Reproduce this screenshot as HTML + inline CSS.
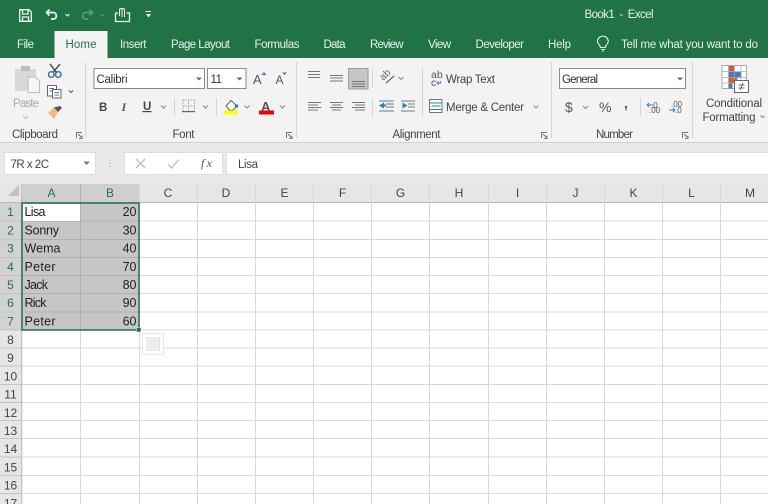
<!DOCTYPE html>
<html><head><meta charset="utf-8"><style>
html,body{margin:0;padding:0;background:#fff;overflow:hidden}
svg{display:block;font-family:"Liberation Sans",sans-serif;filter:blur(.35px)}
text{white-space:pre}
.t{fill:#e8f1eb;font-size:11.5px}
.r{fill:#444;font-size:11.5px}
.c{fill:#222;font-size:12.5px}
.h{fill:#444;font-size:12px;text-anchor:middle}
.hs{fill:#217346;font-size:12px;text-anchor:middle}
.n{fill:#222;font-size:12.5px;text-anchor:end}
</style></head><body>
<svg width="768" height="504" viewBox="0 0 768 504" xmlns="http://www.w3.org/2000/svg">
<!-- Bars -->
<rect width="768" height="504" fill="#fff"/>
<rect width="768" height="59" fill="#217346"/>
<rect y="58" width="768" height="84" fill="#f3f3f3"/>
<rect y="142" width="768" height="1" fill="#d2d2d2"/>
<rect y="143" width="768" height="41" fill="#e9e9e9"/>
<path d="M54.500 58V31H107.500V58Z" fill="#f3f3f3"/>

<!-- QAT -->
<g fill="none" stroke="#f2f6f3" stroke-width="1.300">
<path d="M19.700 9.700H29L31.300 12V21.300H19.700Z"/><path d="M22.500 10V14H28V10M22.500 21V17H28.500V21"/>
<path d="M47 12.500H53.500C57 12.500 57.500 19 53.500 19H51M49.500 9.500L46.500 12.500L49.500 15.500" stroke-width="1.700"/>
<path d="M65.500 14L67.500 16L69.500 14" stroke-width="1"/>
<path d="M92 12.500H85.500C82 12.500 81.500 19 85.500 19H88M89.500 9.500L92.500 12.500L89.500 15.500" stroke="#5c9a78" stroke-width="1.700"/>
<path d="M100.500 14L102.500 16L104.500 14" stroke="#5c9a78" stroke-width="1"/>
<path d="M115.500 13V21.500H129.500V13H126.500M115.500 13H118"/>
<path d="M119.500 16V10C119.500 8 122 8 122 10V17M122 16V10C122 8 124.500 8 124.500 10V17" stroke-width="1"/>
<path d="M145.500 11.500H151" stroke-width="1"/>
</g>
<path d="M146 14H151L148.500 17.500Z" fill="#f2f6f3"/>
<text x="584.500" y="18" class="t" textLength="69">Book1  -  Excel</text>

<!-- Tabs -->
<text x="17" y="48" class="t" textLength="17">File</text>
<text x="65.500" y="48" font-size="11.500" fill="#217346" textLength="31">Home</text>
<text x="120" y="48" class="t" textLength="26.500">Insert</text>
<text x="171" y="48" class="t" textLength="59">Page Layout</text>
<text x="254.500" y="48" class="t" textLength="45">Formulas</text>
<text x="323.500" y="48" class="t" textLength="22">Data</text>
<text x="370" y="48" class="t" textLength="33.500">Review</text>
<text x="428" y="48" class="t" textLength="23">View</text>
<text x="475.500" y="48" class="t" textLength="48.500">Developer</text>
<text x="548" y="48" class="t" textLength="23">Help</text>
<g fill="none" stroke="#e4efe8" stroke-width="1.100"><path d="M600.500 47.500C600 44.500 597.500 44 597.500 41.500A5.400 5.400 0 0 1 608.300 41.500C608.300 44 605.700 44.500 605.300 47.500ZM601 49.500H605M602 51H604"/></g>
<text x="621" y="48" class="t" textLength="137">Tell me what you want to do</text>

<!-- Group dividers -->
<g fill="#d6d6d6">
<rect x="85" y="62" width="1" height="76"/><rect x="296" y="62" width="1" height="76"/><rect x="551" y="62" width="1" height="76"/><rect x="692" y="62" width="1" height="76"/>
<rect x="174" y="98" width="1" height="18"/><rect x="216" y="98" width="1" height="18"/>
<rect x="372" y="69" width="1" height="19"/><rect x="372" y="98" width="1" height="19"/><rect x="422" y="67" width="1" height="50"/>
<rect x="640" y="98" width="1" height="18"/>
</g>

<!-- Clipboard -->
<rect x="15" y="69" width="21" height="22" fill="#d9d7d7"/>
<rect x="21" y="66" width="9" height="5" fill="#bdbbbb"/>
<path d="M28 77H35L39.500 81V92.500H28Z" fill="#f7f7f7" stroke="#bbb" stroke-width="1"/>
<text x="13" y="107" font-size="11.500" fill="#aaa" textLength="26">Paste</text>
<path d="M23 116L25.500 118.500L28 116" fill="none" stroke="#bbb"/>
<g fill="none" stroke="#2f6ea8" stroke-width="1.400"><circle cx="51.300" cy="74.500" r="2.800"/><circle cx="58.300" cy="74.500" r="2.800"/></g>
<path d="M50 64L56.500 72.500M60 64L53 72.500" stroke="#555" stroke-width="1.500" fill="none"/>
<g fill="#fff" stroke="#666" stroke-width="1"><rect x="47.500" y="85.500" width="9" height="10.500"/><rect x="52.500" y="89.500" width="8.500" height="8.500"/></g>
<path d="M49.500 88.500H54M49.500 91H52M54.500 92.500H59M54.500 95H59" stroke="#3b78ad" fill="none"/>
<path d="M69 90.500L71 92.500L73 90.500" fill="none" stroke="#555"/>
<path d="M48 113L54 107.500L58 112L54 119Z" fill="#e9bf7f"/>
<path d="M54 107.500L60 106L62 108L58 112Z" fill="#555"/>
<text x="12" y="138" class="r" textLength="46">Clipboard</text>
<g fill="none" stroke="#777" stroke-width="1"><path d="M76.500 138V132.500H82M78 134L82 138M82 135.500V138.500H79"/></g>

<!-- Font -->
<rect x="94" y="68.500" width="110.500" height="20" fill="#fff" stroke="#8a8a8a"/>
<text x="96.500" y="83" font-size="11.500" fill="#333" textLength="31">Calibri</text>
<path d="M196 77.500H202L199 80.500Z" fill="#666"/>
<rect x="207.500" y="68.500" width="38.500" height="20" fill="#fff" stroke="#8a8a8a"/>
<text x="210.500" y="83" font-size="11.500" fill="#333" textLength="11.500">11</text>
<path d="M236.500 77.500H242.500L239.500 80.500Z" fill="#666"/>
<text x="253" y="84" font-size="13" fill="#555" textLength="10">A</text>
<path d="M261.500 75L264 72L266.500 75Z" fill="#2f7cc0"/>
<text x="275.500" y="84" font-size="12" fill="#555" textLength="9">A</text>
<path d="M282 72.500H287L284.500 75Z" fill="#2f7cc0"/>
<text x="99" y="111" font-size="11.500" font-weight="bold" fill="#444" textLength="8">B</text>
<text x="121.500" y="111" font-size="12" font-style="italic" font-family="Liberation Serif" font-weight="bold" fill="#555" textLength="6">I</text>
<text x="143" y="110" font-size="11.500" font-weight="bold" fill="#444" textLength="8">U</text>
<rect x="142.500" y="111" width="9" height="1.200" fill="#444"/>
<path d="M161 105.500L163.500 108L166 105.500M203 105.500L205.500 108L208 105.500M244.500 105.500L247 108L249.500 105.500M280 105.500L282.500 108L285 105.500" fill="none" stroke="#888"/>
<g fill="none" stroke="#aaa" stroke-dasharray="1.500 1"><path d="M183 100H194M183 106H194M183 100V111M188.500 100V111M194.500 100V111"/></g>
<rect x="182" y="111" width="13" height="1.200" fill="#666"/>
<path d="M226 106L231 100.500L237 106L232.500 110.500H230Z" fill="#f9f9f9" stroke="#666"/>
<circle cx="236.500" cy="106" r="1.700" fill="#2f7cc0"/>
<rect x="224" y="110.500" width="14" height="4" fill="#ffff00"/>
<text x="261" y="111" font-size="13" font-weight="bold" fill="#555" textLength="10">A</text>
<rect x="259" y="110.500" width="15" height="4" fill="#f00000"/>
<text x="172.500" y="138" class="r" textLength="22">Font</text>
<g fill="none" stroke="#777" stroke-width="1"><path d="M286.500 138V132.500H292M288 134L292 138M292 135.500V138.500H289"/></g>

<!-- Alignment -->
<rect x="348.500" y="68.500" width="19.500" height="20.500" fill="#c6c6c6" stroke="#9c9c9c"/>
<g stroke="#777" stroke-width="1" fill="none">
<path d="M308 71.500H320M308 74.500H320M308 77.500H320"/>
<path d="M330 75.500H343M330 78H343M330 81H343"/>
<path d="M352 81.500H365M352 84H365M352 86.500H365"/>
<path d="M308 102.500H321M308 105H318M308 107.500H321M308 110H318"/>
<path d="M330 102.500H343M332 105H341M330 107.500H343M332 110H341"/>
<path d="M352 102.500H365M355 105H365M352 107.500H365M355 110H365"/>
<path d="M379 101H394M386 104H394M386 107H394M379 111H394"/>
<path d="M401 101H415M408 104H415M408 107H415M401 111H415"/>
</g>
<path d="M379 105.500L384 102.500V108.500ZM383 104.500H386V106.500H383Z" fill="#2f7cc0"/>
<path d="M407.500 105.500L402.500 102.500V108.500Z" fill="#2f7cc0"/>
<text x="380" y="79" font-size="10" fill="#666" transform="rotate(-45 384 76)">ab</text>
<path d="M386 83L394 76" stroke="#666" fill="none" stroke-width="1.200"/>
<path d="M398.500 77L401 79.500L403.500 77" fill="none" stroke="#888"/>
<text x="431" y="78" font-size="10.500" fill="#555">ab</text>
<text x="431" y="86" font-size="10.500" fill="#555">c</text>
<path d="M440.500 81V83H437M438.500 81.500L437 83L438.500 84.500" fill="none" stroke="#2f7cc0" stroke-width=".9"/>
<text x="446" y="83" class="r" textLength="49">Wrap Text</text>
<rect x="429.500" y="99.500" width="12.500" height="13" fill="#fff" stroke="#777"/>
<path d="M430 103H442M430 109.500H442M431.500 106H440.500" stroke="#2f7cc0" fill="none"/>
<text x="446" y="111" class="r" textLength="78">Merge &amp; Center</text>
<path d="M533.500 105.500L536 108L538.500 105.500" fill="none" stroke="#888"/>
<text x="392.500" y="138" class="r" textLength="48">Alignment</text>
<g fill="none" stroke="#777" stroke-width="1"><path d="M541.500 138V132.500H547M543 134L547 138M547 135.500V138.500H544"/></g>

<!-- Number -->
<rect x="559.500" y="68.500" width="126" height="20" fill="#fff" stroke="#8a8a8a"/>
<text x="562" y="83" font-size="11.500" fill="#333" textLength="36">General</text>
<path d="M677 77.500H683L680 80.500Z" fill="#666"/>
<text x="565" y="112" font-size="14" fill="#555" textLength="8">$</text>
<path d="M583 106L585.500 108.500L588 106" fill="none" stroke="#888"/>
<text x="599" y="112" font-size="14" fill="#555" textLength="12">%</text>
<text x="624" y="108" font-size="14" font-weight="bold" fill="#555">,</text>
<text x="651" y="108" font-size="8" fill="#555">.0</text>
<text x="649" y="113" font-size="8" fill="#555">.00</text>
<path d="M647 105H653M647 105L649 103M647 105L649 107" stroke="#2f7cc0" fill="none"/>
<text x="671" y="107" font-size="8" fill="#555">.00</text>
<text x="675" y="113" font-size="8" fill="#555">.0</text>
<path d="M669 110H675M675 110L673 108M675 110L673 112" stroke="#2f7cc0" fill="none"/>
<text x="596" y="138" class="r" textLength="37">Number</text>
<g fill="none" stroke="#777" stroke-width="1"><path d="M682.500 138V132.500H688M684 134L688 138M688 135.500V138.500H685"/></g>

<!-- Conditional Formatting -->
<rect x="722" y="65.500" width="24.500" height="23" fill="#fff" stroke="#aaa"/>
<rect x="728.500" y="66" width="5.500" height="6" fill="#d9583a"/>
<rect x="728.500" y="72" width="13" height="5.500" fill="#3f7fc4"/>
<rect x="728.500" y="77.500" width="9" height="5.500" fill="#d9583a"/>
<rect x="728.500" y="83" width="4" height="5.500" fill="#3f7fc4"/>
<path d="M728.500 65V88M734.500 65V88M741 65V88M722 71.500H746M722 77.500H746M722 83H746" stroke="#aaa" stroke-width=".7" fill="none"/>
<rect x="734.500" y="80.500" width="14" height="12" fill="#fff" stroke="#666"/>
<path d="M738.500 85H744.500M738.500 88H744.500M743 83L740 90" stroke="#444" fill="none" stroke-width=".8"/>
<text x="706" y="107" class="r" textLength="56">Conditional</text>
<text x="702.500" y="121" class="r" textLength="53">Formatting</text>
<path d="M760.500 115.500L762.500 117.500L764.500 115.500" fill="none" stroke="#888"/>

<!-- Formula bar -->
<rect x="4.500" y="152.500" width="91" height="22" fill="#fff" stroke="#dcdcdc"/>
<text x="10.500" y="168" font-size="11.500" fill="#444" textLength="38.500">7R x 2C</text>
<path d="M83.500 161.500H90L86.700 165Z" fill="#777"/>
<path d="M110 160V161M110 163V164M110 166V167" stroke="#aaa" fill="none"/>
<rect x="124.500" y="152.500" width="98" height="22" fill="#fff" stroke="#dcdcdc"/>
<rect x="226.500" y="152.500" width="545" height="22" fill="#fff" stroke="#dcdcdc"/>
<path d="M136 159L145 168M145 159L136 168" stroke="#bdbdbd" stroke-width="1.300" fill="none"/>
<path d="M168 164L171.500 168L179 159.500" stroke="#bdbdbd" stroke-width="1.300" fill="none"/>
<text x="201" y="167" font-size="12" font-style="italic" font-family="Liberation Serif" fill="#555" textLength="11">fx</text>
<text x="238" y="168" font-size="11.500" fill="#444" textLength="20">Lisa</text>

<!-- Sheet headers -->
<rect y="184" width="768" height="19" fill="#e6e6e6"/>
<rect y="203" width="22" height="301" fill="#e6e6e6"/>
<rect x="22" y="184" width="117.500" height="18" fill="#cfcfcf"/>
<rect y="203" width="22" height="127" fill="#d2d2d2"/>
<path d="M8 196H19V185Z" fill="#c2c2c2"/>
<path d="M0 202.500H768" stroke="#b9b9b9" fill="none"/>

<!-- Selection fill -->
<rect x="22" y="203" width="117" height="127" fill="#c6c6c6"/>
<rect x="23" y="204" width="57" height="17" fill="#fff"/>

<!-- Grid -->
<g stroke="#d8d8d8" stroke-width="1" fill="none">
<path d="M139.500 203V504M197.500 184V504M255.500 184V504M313.500 184V504M371.500 184V504M429.500 184V504M488.500 184V504M546.500 184V504M604.500 184V504M662.500 184V504M720.500 184V504M80.500 330V504M22 330V504"/>
<path d="M139 221H768M139 239.500H768M139 257.500H768M139 275.500H768M139 293.500H768M139 312H768M139 330H768M22 348H768M22 366H768M22 384.500H768M22 402.500H768M22 420.500H768M22 438.500H768M22 457H768M22 475.500H768M22 493.500H768"/>
</g>
<g stroke="#b0b0b0" stroke-width="1" fill="none">
<path d="M80.500 184V330M22 221H139M22 239.500H139M22 257.500H139M22 275.500H139M22 293.500H139M22 312H139"/>
</g>
<g stroke="#c4c4c4" stroke-width="1" fill="none">
<path d="M0 221H22M0 239.500H22M0 257.500H22M0 275.500H22M0 293.500H22M0 312H22M0 330H22M0 348H22M0 366H22M0 384.500H22M0 402.500H22M0 420.500H22M0 438.500H22M0 457H22M0 475.500H22M0 493.500H22M21.500 184V504"/>
</g>
<rect x="23" y="204" width="57" height="17" fill="#fff"/>

<!-- Column labels -->
<text x="51.500" y="197" class="hs">A</text>
<text x="110" y="197" class="hs">B</text>
<text x="168" y="197" class="h">C</text>
<text x="226" y="197" class="h">D</text>
<text x="284.500" y="197" class="h">E</text>
<text x="342.500" y="197" class="h">F</text>
<text x="400.500" y="197" class="h">G</text>
<text x="459" y="197" class="h">H</text>
<text x="517.500" y="197" class="h">I</text>
<text x="575.500" y="197" class="h">J</text>
<text x="633.500" y="197" class="h">K</text>
<text x="691.500" y="197" class="h">L</text>
<text x="750" y="197" class="h">M</text>

<!-- Row labels -->
<text x="10.500" y="216" class="hs">1</text>
<text x="10.500" y="234.500" class="hs">2</text>
<text x="10.500" y="252.500" class="hs">3</text>
<text x="10.500" y="271" class="hs">4</text>
<text x="10.500" y="289" class="hs">5</text>
<text x="10.500" y="307" class="hs">6</text>
<text x="10.500" y="325.500" class="hs">7</text>
<text x="10.500" y="344" class="h">8</text>
<text x="10.500" y="362" class="h">9</text>
<text x="10.500" y="380.500" class="h">10</text>
<text x="10.500" y="398.500" class="h">11</text>
<text x="10.500" y="417" class="h">12</text>
<text x="10.500" y="435" class="h">13</text>
<text x="10.500" y="453" class="h">14</text>
<text x="10.500" y="471.500" class="h">15</text>
<text x="10.500" y="489.500" class="h">16</text>
<text x="10.500" y="507.500" class="h">17</text>

<!-- Cells -->
<text x="24.500" y="216" class="c" textLength="21">Lisa</text>
<text x="24.500" y="234.500" class="c" textLength="34.500">Sonny</text>
<text x="24.500" y="252.500" class="c" textLength="36">Wema</text>
<text x="24.500" y="271" class="c" textLength="31">Peter</text>
<text x="24.500" y="289" class="c" textLength="23.500">Jack</text>
<text x="24.500" y="307" class="c" textLength="22">Rick</text>
<text x="24.500" y="325.500" class="c" textLength="31">Peter</text>
<text x="136.500" y="216" class="n">20</text>
<text x="136.500" y="234.500" class="n">30</text>
<text x="136.500" y="252.500" class="n">40</text>
<text x="136.500" y="271" class="n">70</text>
<text x="136.500" y="289" class="n">80</text>
<text x="136.500" y="307" class="n">90</text>
<text x="136.500" y="325.500" class="n">60</text>

<!-- Selection border -->
<rect x="22" y="203" width="117" height="127" fill="none" stroke="#217346" stroke-width="1.500"/>
<rect x="136.500" y="327.500" width="4.500" height="4.500" fill="#217346" stroke="#fff" stroke-width=".5"/>

<!-- Quick analysis -->
<rect x="142.500" y="333.500" width="21" height="21" fill="#fff" stroke="#e3ebe7"/>
<rect x="147" y="338" width="12.500" height="12" fill="#f3f3f3" stroke="#ddd"/>
<path d="M149 341H158M149 344H158" stroke="#e6d7c9" fill="none"/><path d="M149 347H158" stroke="#d5e2f0" fill="none"/>
</svg>
</body></html>
